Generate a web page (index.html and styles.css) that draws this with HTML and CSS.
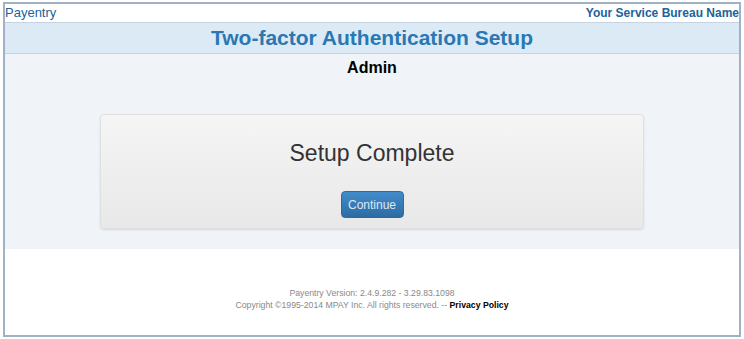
FILE: index.html
```html
<!DOCTYPE html>
<html>
<head>
<meta charset="utf-8">
<link rel="stylesheet" href="styles.css">
</head>
<body>
<div class="frame">
  <div class="topbar">
    <span class="brand">Payentry</span>
    <span class="bureau">Your Service Bureau Name</span>
  </div>
  <div class="titlebar">Two-factor Authentication Setup</div>
  <div class="main">
    <div class="user">Admin</div>
    <div class="card">
      <h2 class="card-title">Setup Complete</h2>
      <button class="btn">Continue</button>
    </div>
  </div>
  <div class="footer">
    <div class="line">Payentry Version: 2.4.9.282 - 3.29.83.1098</div>
    <div class="line">Copyright ©1995-2014 MPAY Inc. All rights reserved. -- <a class="privacy">Privacy Policy</a></div>
  </div>
</div>
</body>
</html>
```
FILE: styles.css
```css
html, body {
  margin: 0;
  padding: 0;
  background: #ffffff;
}
body {
  font-family: "Liberation Sans", Arial, sans-serif;
}
.frame {
  margin: 2px 3px;
  height: 335px;
  box-sizing: border-box;
  border: 2px solid #a2b2c5;
  display: flex;
  flex-direction: column;
  background: #ffffff;
}
.topbar {
  height: 18px;
  display: flex;
  justify-content: space-between;
  align-items: center;
  font-size: 13px;
  color: #22629a;
  line-height: 18px;
}
.bureau {
  font-weight: bold;
  font-size: 12px;
}
.titlebar {
  height: 30px;
  line-height: 30px;
  background: #dceaf6;
  border-top: 1px solid #c6d4e2;
  border-bottom: 1px solid #c6d4e2;
  text-align: center;
  font-size: 21px;
  font-weight: bold;
  color: #2a78b2;
}
.main {
  background: #f0f4f8;
  height: 195px;
  box-sizing: border-box;
  padding-top: 4px;
  display: flex;
  flex-direction: column;
  align-items: center;
}
.user {
  font-size: 16px;
  font-weight: bold;
  color: #000;
  line-height: 20px;
}
.card {
  margin-top: 36px;
  width: 544px;
  height: 115px;
  box-sizing: border-box;
  border: 1px solid #e0e0e0;
  border-radius: 4px;
  background: linear-gradient(#f5f5f5, #e8e8e8);
  box-shadow: 0 1px 2px rgba(0,0,0,0.12);
  display: flex;
  flex-direction: column;
  align-items: center;
  padding-top: 24px;
}
.card-title {
  margin: 0;
  font-size: 23px;
  font-weight: normal;
  line-height: 28px;
  color: #333;
}
.btn {
  margin-top: 24px;
  width: 63px;
  height: 27px;
  border: 1px solid #2d6ca2;
  border-radius: 4px;
  background: linear-gradient(#428bca, #2d6ca2);
  color: #dce9f7;
  font-family: "Liberation Sans", Arial, sans-serif;
  font-size: 12px;
  padding: 0;
}
.footer {
  flex: 1;
  padding-top: 38px;
  text-align: center;
  font-size: 8.7px;
  line-height: 12px;
  color: #888;
}
.privacy {
  color: #000;
  font-weight: bold;
}
```
